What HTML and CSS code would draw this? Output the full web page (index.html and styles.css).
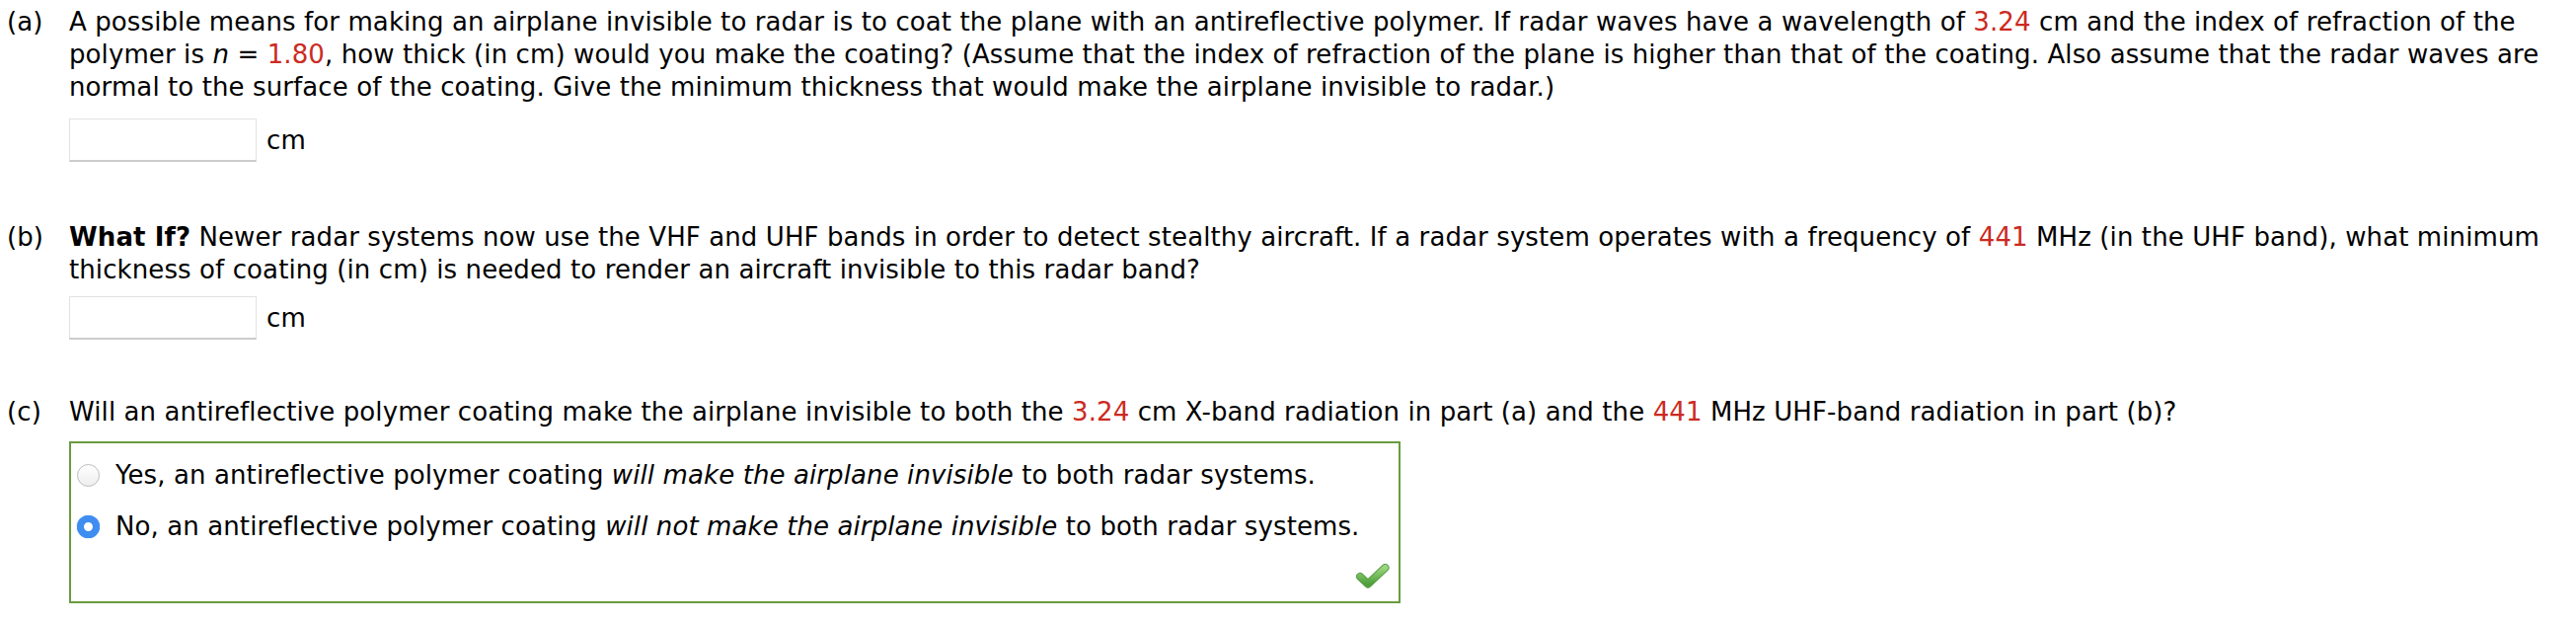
FILE: index.html
```html
<!DOCTYPE html>
<html>
<head>
<meta charset="utf-8">
<link rel="stylesheet" href="styles.css">
</head>
<body>
<div class="question">
  <div class="part part-a">
    <div class="label">(a)</div>
    <div class="content">
      <p class="text">A possible means for making an airplane invisible to radar is to coat the plane with an antireflective polymer. If radar waves have a wavelength of <span class="red">3.24</span> cm and the index of refraction of the polymer is <i>n</i> = <span class="red">1.80</span>, how thick (in cm) would you make the coating? (Assume that the index of refraction of the plane is higher than that of the coating. Also assume that the radar waves are normal to the surface of the coating. Give the minimum thickness that would make the airplane invisible to radar.)</p>
      <div class="answer"><span class="input"></span><span class="unit">cm</span></div>
    </div>
  </div>
  <div class="part part-b">
    <div class="label">(b)</div>
    <div class="content">
      <p class="text"><b>What If?</b> Newer radar systems now use the VHF and UHF bands in order to detect stealthy aircraft. If a radar system operates with a frequency of <span class="red">441</span> MHz (in the UHF band), what minimum thickness of coating (in cm) is needed to render an aircraft invisible to this radar band?</p>
      <div class="answer"><span class="input"></span><span class="unit">cm</span></div>
    </div>
  </div>
  <div class="part part-c">
    <div class="label">(c)</div>
    <div class="content">
      <p class="text">Will an antireflective polymer coating make the airplane invisible to both the <span class="red">3.24</span> cm X-band radiation in part (a) and the <span class="red">441</span> MHz UHF-band radiation in part (b)?</p>
      <div class="choices">
        <div class="choice"><span class="radio"></span><span class="choice-text">Yes, an antireflective polymer coating <i>will make the airplane invisible</i> to both radar systems.</span></div>
        <div class="choice"><span class="radio checked"></span><span class="choice-text">No, an antireflective polymer coating <i>will not make the airplane invisible</i> to both radar systems.</span></div>
        <div class="status">
          <svg class="check" width="34" height="26" viewBox="0 0 34 26">
            <defs>
              <linearGradient id="cg" x1="0" y1="0" x2="0" y2="1">
                <stop offset="0" stop-color="#9ad67d"/>
                <stop offset="1" stop-color="#4e9f3c"/>
              </linearGradient>
            </defs>
            <path d="M4 13 L12 20.5 L29.5 4" fill="none" stroke="#5a9c48" stroke-width="8" stroke-linecap="round" stroke-linejoin="round"/>
            <path d="M4 13 L12 20.5 L29.5 4" fill="none" stroke="url(#cg)" stroke-width="6" stroke-linecap="round" stroke-linejoin="round"/>
          </svg>
        </div>
      </div>
    </div>
  </div>
</div>
</body>
</html>
```

FILE: styles.css
```css
html, body {
  margin: 0;
  padding: 0;
  background: #ffffff;
}

body {
  font-family: "DejaVu Sans", Verdana, sans-serif;
  font-size: 26px;
  letter-spacing: 0.1px;
  line-height: 33px;
  color: #000000;
}

.question {
  padding: 6px 0 0 7px;
  width: 2598px;
}

.part {
  display: flex;
}

.label {
  width: 63px;
  flex: none;
}

.content {
  flex: 1;
}

.text {
  margin: 0;
}

.red {
  color: #cc2a22;
}

.answer {
  display: flex;
  align-items: center;
  gap: 10px;
  margin-top: 15px;
}

.part-b .answer {
  margin-top: 10px;
}

.input {
  display: block;
  box-sizing: border-box;
  width: 190px;
  height: 44px;
  border: 1px solid #e2e2e2;
  border-bottom: 2px solid #cccccc;
  background: #ffffff;
}

.part-b {
  margin-top: 60px;
}

.part-c {
  margin-top: 57px;
}

.choices {
  box-sizing: border-box;
  width: 1349px;
  height: 164px;
  margin-top: 13px;
  border: 2px solid #6a9b40;
  padding: 6px 0 0 4px;
  display: flex;
  flex-direction: column;
}

.choice {
  display: flex;
  align-items: center;
  height: 52px;
  gap: 16px;
}

.radio {
  flex: none;
  box-sizing: border-box;
  width: 23px;
  height: 23px;
  border-radius: 50%;
  border: 1px solid #bdbdbd;
  background: linear-gradient(#ffffff, #eeeeee);
  margin-left: 2px;
}

.radio.checked {
  border: 7.5px solid #3f8df0;
  background: #ffffff;
  box-shadow: 0 0 1px #3f8df0;
}

.status {
  flex: 1;
  display: flex;
  justify-content: flex-end;
  align-items: flex-end;
  padding: 0 9px 12px 0;
}

.check {
  display: block;
}
```
